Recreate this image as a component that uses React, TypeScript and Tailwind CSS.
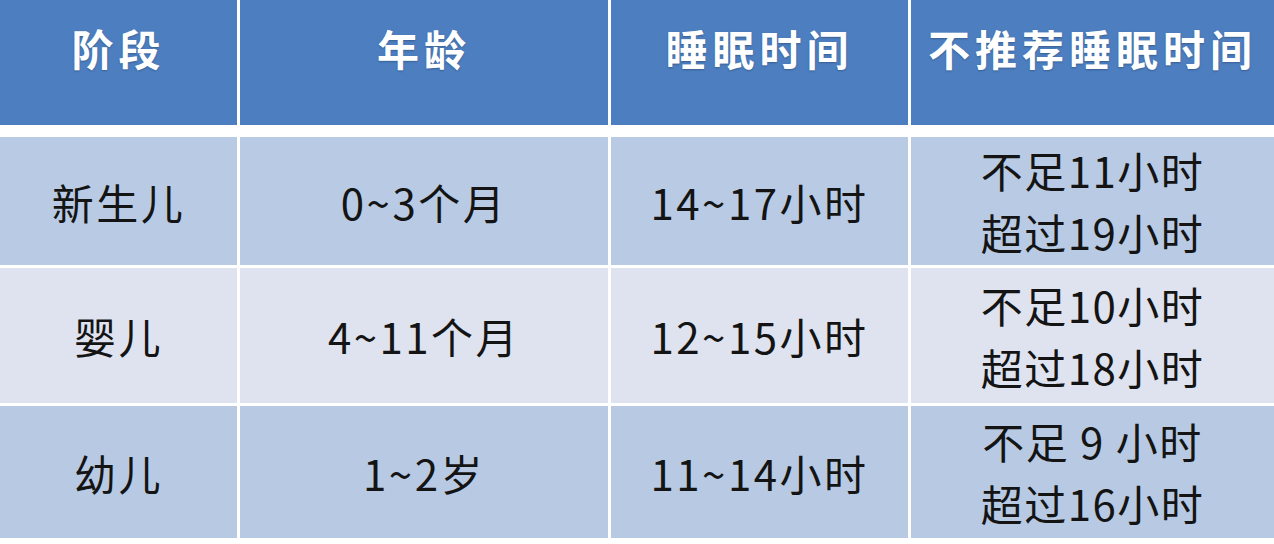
const font = { fontFamily: '"Noto Sans CJK SC", "Noto Sans", sans-serif' };

const cols = ['w-[237px]', 'w-[368px]', 'w-[297px]', 'w-[363px]'];

const headers = ['阶段', '年龄', '睡眠时间', '不推荐睡眠时间'];

const rows = [
  {
    h: 'h-[128px]',
    bg: 'bg-[#b9cbe4]',
    cells: ['新生儿', '0~3个月', '14~17小时'],
    extra: ['不足11小时', '超过19小时'],
  },
  {
    h: 'h-[135px]',
    bg: 'bg-[#dee3ef]',
    cells: ['婴儿', '4~11个月', '12~15小时'],
    extra: ['不足10小时', '超过18小时'],
  },
  {
    h: 'h-[132px]',
    bg: 'bg-[#b8cae3]',
    cells: ['幼儿', '1~2岁', '11~14小时'],
    extra: ['不足 9 小时', '超过16小时'],
  },
];

export default function App() {
  return (
    <div className="w-[1274px] h-[544px] bg-white overflow-hidden" style={font}>
      {/* header */}
      <div className="flex gap-x-[3px] h-[125px]">
        {headers.map((t, i) => (
          <div
            key={t}
            className={`${cols[i]} shrink-0 bg-[#4c7ec0] flex justify-center pt-[23px] text-white font-bold text-[42px] leading-[50px] tracking-[5px] [text-shadow:0_1px_2px_rgba(0,0,0,0.25)]`}
          >
            {t}
          </div>
        ))}
      </div>

      <div className="h-[12px]" />

      <div className="flex flex-col gap-y-[3px]">
        {rows.map((r) => (
          <div key={r.cells[0]} className={`flex gap-x-[3px] ${r.h}`}>
            {r.cells.map((c, i) => (
              <div
                key={c}
                className={`${cols[i]} shrink-0 ${r.bg} flex items-center justify-center text-[#141414] text-[42px] tracking-[2.5px]`}
              >
                {c}
              </div>
            ))}
            <div
              className={`${cols[3]} shrink-0 ${r.bg} flex flex-col items-center justify-center text-[#141414] text-[42px] leading-[62px] tracking-[1.5px]`}
            >
              {r.extra.map((e) => (
                <div key={e} className="whitespace-pre">
                  {e}
                </div>
              ))}
            </div>
          </div>
        ))}
      </div>
    </div>
  );
}
